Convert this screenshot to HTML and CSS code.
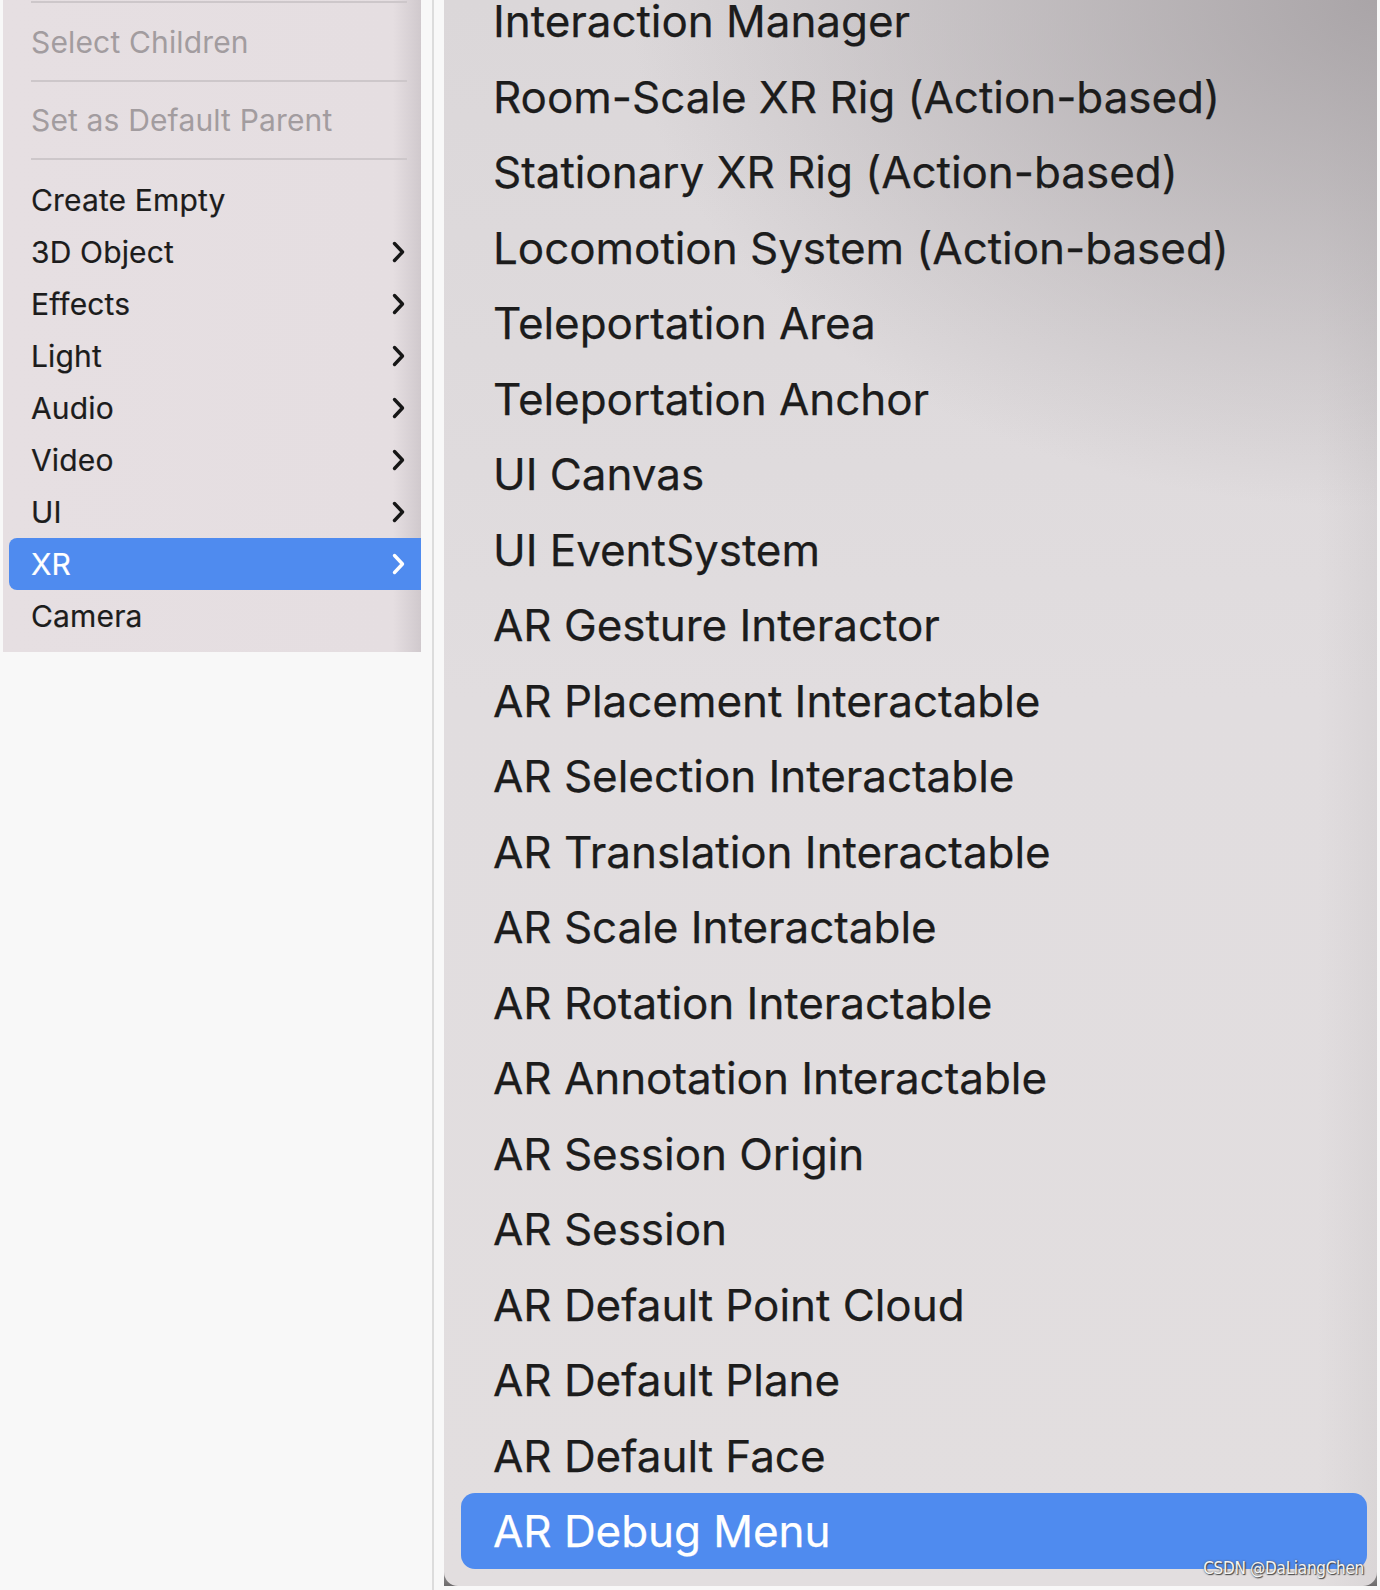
FILE: index.html
```html
<!DOCTYPE html>
<html lang="en">
<head>
<meta charset="utf-8">
<title>GameObject menu – XR submenu</title>
<link rel="stylesheet" href="styles.css">
</head>
<body>
<div class="screen">
  <div class="menu-left">
    <div class="sep sep-top"></div>
    <div class="item disabled tall-a">Select Children</div>
    <div class="sep"></div>
    <div class="item disabled tall-b">Set as Default Parent</div>
    <div class="sep"></div>
    <div class="items">
      <div class="item"><span>Create Empty</span></div>
      <div class="item"><span>3D Object</span><svg class="chev" viewBox="0 0 13 22"><polyline points="2.5,2.5 10.5,11 2.5,19.5"/></svg></div>
      <div class="item"><span>Effects</span><svg class="chev" viewBox="0 0 13 22"><polyline points="2.5,2.5 10.5,11 2.5,19.5"/></svg></div>
      <div class="item"><span>Light</span><svg class="chev" viewBox="0 0 13 22"><polyline points="2.5,2.5 10.5,11 2.5,19.5"/></svg></div>
      <div class="item"><span>Audio</span><svg class="chev" viewBox="0 0 13 22"><polyline points="2.5,2.5 10.5,11 2.5,19.5"/></svg></div>
      <div class="item"><span>Video</span><svg class="chev" viewBox="0 0 13 22"><polyline points="2.5,2.5 10.5,11 2.5,19.5"/></svg></div>
      <div class="item"><span>UI</span><svg class="chev" viewBox="0 0 13 22"><polyline points="2.5,2.5 10.5,11 2.5,19.5"/></svg></div>
      <div class="item active"><span>XR</span><svg class="chev" viewBox="0 0 13 22"><polyline points="2.5,2.5 10.5,11 2.5,19.5"/></svg></div>
      <div class="item"><span>Camera</span></div>
    </div>
  </div>

  <div class="rule"></div>

  <div class="panel">
    <div class="panel-body">
      <div class="list">
        <div class="row"><span>Interaction Manager</span></div>
        <div class="row"><span>Room-Scale XR Rig (Action-based)</span></div>
        <div class="row"><span>Stationary XR Rig (Action-based)</span></div>
        <div class="row"><span>Locomotion System (Action-based)</span></div>
        <div class="row"><span>Teleportation Area</span></div>
        <div class="row"><span>Teleportation Anchor</span></div>
        <div class="row"><span>UI Canvas</span></div>
        <div class="row"><span>UI EventSystem</span></div>
        <div class="row"><span>AR Gesture Interactor</span></div>
        <div class="row"><span>AR Placement Interactable</span></div>
        <div class="row"><span>AR Selection Interactable</span></div>
        <div class="row"><span>AR Translation Interactable</span></div>
        <div class="row"><span>AR Scale Interactable</span></div>
        <div class="row"><span>AR Rotation Interactable</span></div>
        <div class="row"><span>AR Annotation Interactable</span></div>
        <div class="row"><span>AR Session Origin</span></div>
        <div class="row"><span>AR Session</span></div>
        <div class="row"><span>AR Default Point Cloud</span></div>
        <div class="row"><span>AR Default Plane</span></div>
        <div class="row"><span>AR Default Face</span></div>
        <div class="row active"><span>AR Debug Menu</span></div>
      </div>
    </div>
  </div>
</div>
<div class="watermark">CSDN @DaLiangChen</div>
</body>
</html>
```

FILE: styles.css
```css
html, body {
  margin: 0;
  padding: 0;
}

body {
  background: #f8f8f8;
  font-family: "Inter", "Noto Sans", "Liberation Sans", sans-serif;
  color: #1c1c1c;
  width: 1380px;
  height: 1590px;
  overflow: hidden;
  position: relative;
}

.screen {
  display: flex;
  align-items: flex-start;
  height: 1590px;
}

/* ---------- left menu ---------- */
.menu-left {
  margin-left: 3px;
  width: 418px;
  padding-bottom: 10px;
  background: linear-gradient(90deg, #e6dfe2 0, #e5dee1 calc(100% - 28px), #d0c9cd 100%);
}

.sep {
  height: 2px;
  margin: 0 14px 0 28px;
  background: #cdc7ca;
}

.sep-top {
  margin-top: 1px;
}

.item {
  display: flex;
  align-items: center;
  justify-content: space-between;
  height: 52px;
  padding: 0 16px 0 28px;
  font-size: 30px;
  line-height: 36px;
  letter-spacing: 0.15px;
  white-space: nowrap;
  -webkit-text-stroke: 0.2px currentColor;
}

.item.disabled {
  color: #a29c9f;
  -webkit-text-stroke: 0;
}

.item.tall-a {
  height: 77px;
}

.item.tall-b {
  height: 76px;
}

.items {
  padding-top: 14px;
}

.item.active {
  margin-left: 6px;
  padding-left: 22px;
  background: #4f8bef;
  color: #ffffff;
  border-radius: 8px 0 0 8px;
}

.chev {
  width: 13px;
  height: 22px;
  fill: none;
  stroke: #161616;
  stroke-width: 3.4;
  stroke-linecap: round;
  stroke-linejoin: round;
}

.item.active .chev {
  stroke: #ffffff;
}

/* ---------- divider line ---------- */
.rule {
  width: 2px;
  height: 1590px;
  margin: 0 10px 0 11px;
  background: #dcdcdc;
}

/* ---------- right submenu ---------- */
.panel {
  width: 933px;
  height: 1586px;
  background: linear-gradient(0deg, #6e6c6d 0, #b9b7b8 30px, #d0cecf 60px);
}

.panel-body {
  height: 100%;
  border-radius: 0 0 14px 14px;
  overflow: hidden;
  background:
    radial-gradient(ellipse 80% 32% at 100% 0%, rgba(166, 161, 164, 0.92) 0%, rgba(166, 161, 164, 0) 100%),
    linear-gradient(90deg, rgba(0, 0, 0, 0) 0, rgba(0, 0, 0, 0) calc(100% - 60px), rgba(120, 115, 118, 0.08) 100%),
    linear-gradient(180deg, #dbd7d9 0, #e1dddf 700px, #e2dedf 100%);
}

.list {
  margin-top: -16.75px;
}

.row {
  display: flex;
  align-items: center;
  height: 75.5px;
  padding-left: 49px;
  font-size: 44px;
  line-height: 40px;
  letter-spacing: -0.05px;
  color: #1c1c1c;
  white-space: nowrap;
  -webkit-text-stroke: 0.25px currentColor;
}

.row.active {
  margin: 0 10px 0 17px;
  padding-left: 32px;
  background: #4f8bef;
  color: #ffffff;
  border-radius: 14px;
}

/* ---------- watermark overlay ---------- */
.watermark {
  position: absolute;
  right: 16px;
  bottom: 12px;
  font-family: "Liberation Sans Narrow", "DejaVu Sans Condensed", "Liberation Sans", sans-serif;
  font-stretch: condensed;
  font-size: 17px;
  letter-spacing: -0.3px;
  color: #f4f4f4;
  text-shadow: 0 0 2px #555, 1px 1px 1px #444;
  white-space: nowrap;
}
```
